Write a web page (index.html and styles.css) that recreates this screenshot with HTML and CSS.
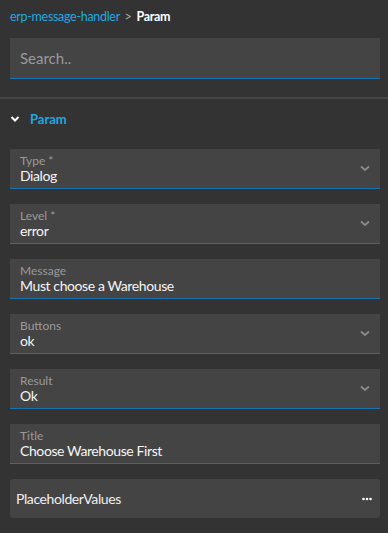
FILE: index.html
```html
<!DOCTYPE html>
<html lang="en">
<head>
  <meta charset="UTF-8">
  <title>Param</title>
  <link rel="stylesheet" href="styles.css">
</head>
<body>
  <div class="crumbs">
    <span class="crumb-link">erp-message-handler</span>
    <span class="crumb-sep">&gt;</span>
    <span class="crumb-here">Param</span>
  </div>

  <div class="search">
    <input type="text" placeholder="Search..">
  </div>

  <div class="divider"></div>

  <div class="group-head">
    <svg class="group-chevron" width="10" height="8" viewBox="0 0 10 8"><path d="M1.5 2 L5 5.5 L8.5 2" fill="none" stroke="#fff" stroke-width="2"/></svg>
    <span>Param</span>
  </div>

  <div class="field">
    <div class="field-text">
      <div class="field-label">Type *</div>
      <div class="field-value">Dialog</div>
    </div>
    <svg class="select-chevron" width="10" height="7" viewBox="0 0 10 7"><path d="M1 1.5 L5 5 L9 1.5" fill="none" stroke="#8a8a8a" stroke-width="1.8"/></svg>
  </div>

  <div class="field">
    <div class="field-text">
      <div class="field-label">Level *</div>
      <div class="field-value">error</div>
    </div>
    <svg class="select-chevron" width="10" height="7" viewBox="0 0 10 7"><path d="M1 1.5 L5 5 L9 1.5" fill="none" stroke="#8a8a8a" stroke-width="1.8"/></svg>
  </div>

  <div class="field">
    <div class="field-text">
      <div class="field-label">Message</div>
      <div class="field-value">Must choose a Warehouse</div>
    </div>
  </div>

  <div class="field">
    <div class="field-text">
      <div class="field-label">Buttons</div>
      <div class="field-value">ok</div>
    </div>
    <svg class="select-chevron" width="10" height="7" viewBox="0 0 10 7"><path d="M1 1.5 L5 5 L9 1.5" fill="none" stroke="#8a8a8a" stroke-width="1.8"/></svg>
  </div>

  <div class="field">
    <div class="field-text">
      <div class="field-label">Result</div>
      <div class="field-value">Ok</div>
    </div>
    <svg class="select-chevron" width="10" height="7" viewBox="0 0 10 7"><path d="M1 1.5 L5 5 L9 1.5" fill="none" stroke="#8a8a8a" stroke-width="1.8"/></svg>
  </div>

  <div class="field">
    <div class="field-text">
      <div class="field-label">Title</div>
      <div class="field-value">Choose Warehouse First</div>
    </div>
  </div>

  <div class="list-field">
    <span>PlaceholderValues</span>
    <svg class="more" width="10" height="4" viewBox="0 0 10 4"><circle cx="1.5" cy="2" r="1.3" fill="#fff"/><circle cx="5" cy="2" r="1.3" fill="#fff"/><circle cx="8.5" cy="2" r="1.3" fill="#fff"/></svg>
  </div>
</body>
</html>
```

FILE: styles.css
```css
body { margin: 0; background: #333333; font-family: "Lato", "Liberation Sans", sans-serif; color: #f2f2f2; }

.crumbs { padding: 8px 10px 0; height: 22px; line-height: 18px; font-size: 12.5px; letter-spacing: -0.3px; }
.crumb-link { color: #1fa8e0; }
.crumb-sep { color: #aaa; margin: 0 2px; }
.crumb-here { color: #fff; font-weight: bold; }

.search { margin: 8px 8px 0 10px; height: 40px; background: #444444; border-bottom: 1px solid #1b72b0; }
.search input { box-sizing: border-box; width: 100%; height: 40px; border: none; background: transparent; padding: 0 10px; font-family: inherit; font-size: 15px; color: #eee; outline: none; }
.search input::placeholder { color: #9a9a9a; }

.divider { margin-top: 18px; border-top: 2px solid #464646; }

.group-head { display: flex; align-items: center; height: 40px; padding: 0 10px; font-size: 13px; font-weight: bold; color: #1fa8e0; }
.group-chevron { margin-right: 10px; }

.field { display: flex; align-items: center; margin: 8px 8px 15px 10px; height: 40px; box-sizing: border-box; background: #444444; border-bottom: 1px solid #1b72b0; padding: 5px 10px 0; }
.group-head + .field { margin-top: 10px; }
.field-text { flex: 1; align-self: flex-start; }
.field-label { font-size: 12px; line-height: 14px; color: #9a9a9a; }
.field-value { font-size: 14px; line-height: 15px; color: #f4f4f4; letter-spacing: -0.4px; }
.select-chevron { margin-top: -5px; }

.list-field { display: flex; align-items: center; justify-content: space-between; margin: 0 8px 0 10px; height: 39px; background: #444444; border-radius: 3px; padding: 0 8px 0 6px; font-size: 14px; color: #f0f0f0; letter-spacing: -0.4px; }
```
